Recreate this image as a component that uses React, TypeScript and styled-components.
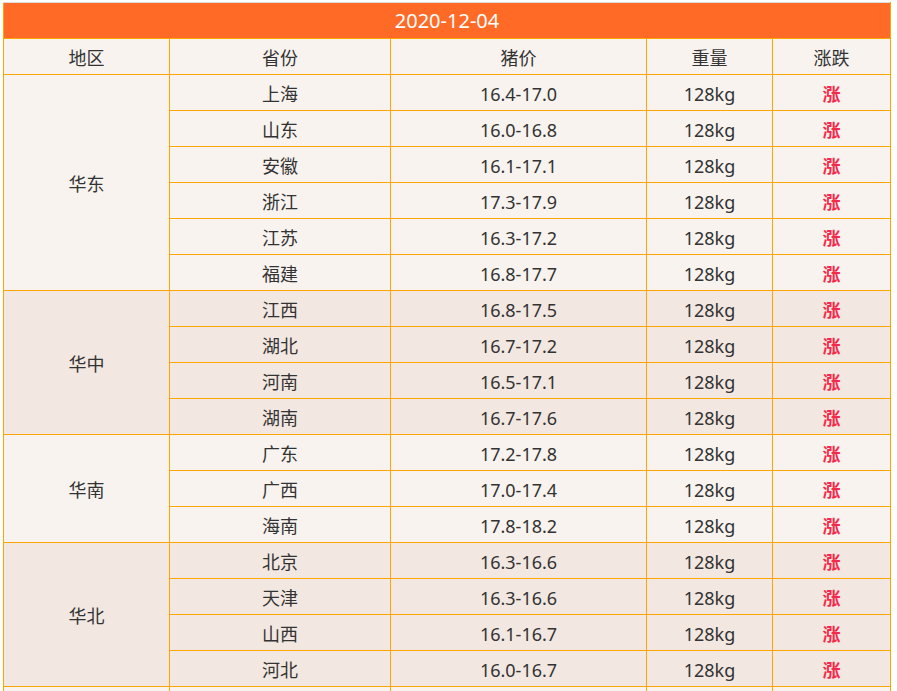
import styled, { createGlobalStyle } from "styled-components";

interface RegionType {
  name: string;
  provinces: { name: string; price: string }[];
}

const regions: RegionType[] = [
  {
    name: "华东",
    provinces: [
      { name: "上海", price: "16.4-17.0" },
      { name: "山东", price: "16.0-16.8" },
      { name: "安徽", price: "16.1-17.1" },
      { name: "浙江", price: "17.3-17.9" },
      { name: "江苏", price: "16.3-17.2" },
      { name: "福建", price: "16.8-17.7" },
    ],
  },
  {
    name: "华中",
    provinces: [
      { name: "江西", price: "16.8-17.5" },
      { name: "湖北", price: "16.7-17.2" },
      { name: "河南", price: "16.5-17.1" },
      { name: "湖南", price: "16.7-17.6" },
    ],
  },
  {
    name: "华南",
    provinces: [
      { name: "广东", price: "17.2-17.8" },
      { name: "广西", price: "17.0-17.4" },
      { name: "海南", price: "17.8-18.2" },
    ],
  },
  {
    name: "华北",
    provinces: [
      { name: "北京", price: "16.3-16.6" },
      { name: "天津", price: "16.3-16.6" },
      { name: "山西", price: "16.1-16.7" },
      { name: "河北", price: "16.0-16.7" },
    ],
  },
  {
    name: "东北",
    provinces: [{ name: "辽宁", price: "15.9-16.5" }],
  },
];

const GlobalStyle = createGlobalStyle`
  body {
    margin: 0;
    padding: 2px 0 0 3px;
    background: #ffffff;
    font-family: "Noto Sans", "Noto Sans CJK SC", sans-serif;
    overflow: hidden;
  }
`;

const Table = styled.table`
  border-collapse: collapse;
  table-layout: fixed;
  width: 888px;
  border-top: 1px solid #dcdcdc;
`;

const Title = styled.th`
  height: 35px;
  padding: 0;
  background: #ff6a26;
  color: #ffffff;
  font-size: 20px;
  font-weight: 400;
  line-height: 35px;
  border: 1px solid #ffa500;
  border-top-color: #dcdcdc;
`;

const Cell = styled.td<{ $shade?: boolean }>`
  height: 33px;
  padding: 2px 0 0;
  text-align: center;
  font-size: 18px;
  line-height: 24px;
  color: #333333;
  border: 1px solid #ffa500;
  background: ${(p) => (p.$shade ? "#f2e7e1" : "#f8f3ef")};
`;

const Rise = styled(Cell)`
  color: #f5294a;
  font-weight: 700;
`;

const App = () => {
  return (
    <>
      <GlobalStyle />
      <Table>
        <colgroup>
          <col style={{ width: 166 }} />
          <col style={{ width: 221 }} />
          <col style={{ width: 256 }} />
          <col style={{ width: 126 }} />
          <col style={{ width: 118 }} />
        </colgroup>
        <thead>
          <tr>
            <Title colSpan={5}>2020-12-04</Title>
          </tr>
        </thead>
        <tbody>
          <tr>
            <Cell>地区</Cell>
            <Cell>省份</Cell>
            <Cell>猪价</Cell>
            <Cell>重量</Cell>
            <Cell>涨跌</Cell>
          </tr>
          {regions.map((region, ri) =>
            region.provinces.map((p, pi) => (
              <tr key={region.name + p.name}>
                {pi === 0 && (
                  <Cell $shade={ri % 2 === 1} rowSpan={region.provinces.length}>
                    {region.name}
                  </Cell>
                )}
                <Cell $shade={ri % 2 === 1}>{p.name}</Cell>
                <Cell $shade={ri % 2 === 1}>{p.price}</Cell>
                <Cell $shade={ri % 2 === 1}>128kg</Cell>
                <Rise $shade={ri % 2 === 1}>涨</Rise>
              </tr>
            ))
          )}
        </tbody>
      </Table>
    </>
  );
};

export default App;
